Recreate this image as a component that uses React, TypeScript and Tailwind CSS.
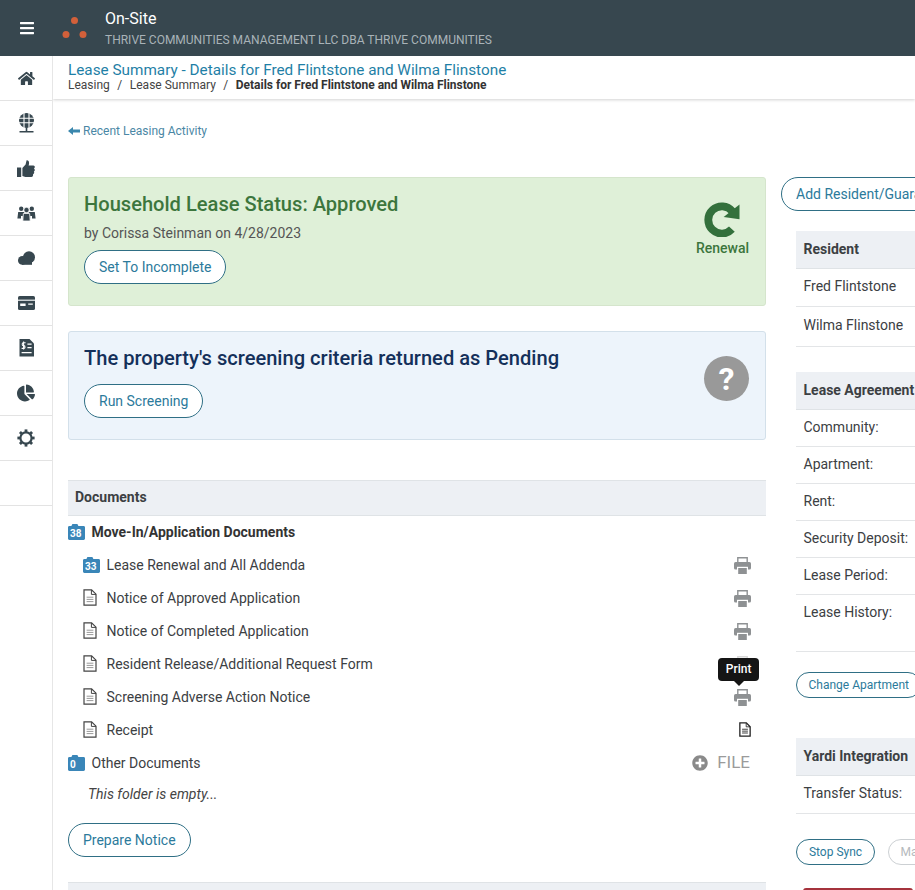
import type { ReactNode } from "react"
import { FaBars, FaChartPie, FaHome, FaPlusCircle } from "react-icons/fa"

function GlobeIcon() {
  return (
    <svg width="17" height="20" viewBox="0 0 17 20">
      <circle cx="8.5" cy="7.5" r="7.5" fill="currentColor" />
      <path d="M0.5 5.3h16M0.5 9.7h16M6 0v15M11 0v15" stroke="#fff" strokeWidth="1.1" />
      <path d="M8.5 15v3M1.5 18.8h14" stroke="currentColor" strokeWidth="1.6" />
    </svg>
  )
}

function ThumbIcon() {
  return (
    <svg width="18" height="17" viewBox="0 0 18 17" fill="currentColor">
      <path d="M0 7.5h4.2V17H0z" />
      <path d="M5.4 8 L8.6 4.6 L9.6 0.3 C11.8 0 12.7 2.2 11.6 5.6 H16.4 C18 5.6 18.3 7.8 17 8.4 C18.2 9.3 18 11 16.8 11.5 C17.6 12.5 17.1 14 16 14.3 C16.4 15.6 15.6 17 14.4 17 H8.4 L5.4 16z" />
    </svg>
  )
}

function UsersIcon() {
  return (
    <svg width="19" height="15" viewBox="0 0 19 15" fill="currentColor">
      <circle cx="4.2" cy="2.8" r="2.2" />
      <circle cx="14.8" cy="2.8" r="2.2" />
      <path d="M1.2 6h6v6.5H5.8V10H4v2.6H0.4z" />
      <path d="M11.8 6h6l0.8 6.6H15V10h-1.8v2.5h-1.4z" />
      <circle cx="9.5" cy="4" r="2.7" stroke="#fff" strokeWidth="0.8" />
      <path d="M6.4 7.4h6.2l0.6 7.6H5.8z" stroke="#fff" strokeWidth="0.8" />
    </svg>
  )
}

function CloudIcon() {
  return (
    <svg width="17" height="14" viewBox="0 0 17 14" fill="currentColor">
      <circle cx="4.4" cy="9.4" r="4.4" />
      <circle cx="11" cy="6.2" r="6" />
      <path d="M4 10h10v3.8H4z" />
    </svg>
  )
}

function CardIcon() {
  return (
    <svg width="17" height="14" viewBox="0 0 17 14">
      <rect width="17" height="14" rx="1.6" fill="currentColor" />
      <path d="M0 4.2h17" stroke="#fff" strokeWidth="1.1" />
      <path d="M2.2 7.4h5.4v2.6H2.2zM10.2 7.4h4.6v1.4h-4.6z" fill="#fff" />
    </svg>
  )
}

function BillIcon() {
  return (
    <svg width="15" height="18" viewBox="0 0 15 18">
      <path d="M0.5 0H10.5L15 4.5V17.5H0.5z" fill="currentColor" />
      <path d="M6.6 3.8H4.2C2.9 3.8 2.9 6.6 4.2 6.6H5C6.3 6.6 6.3 9.4 5 9.4H2.6M4.6 2.6V10.6" fill="none" stroke="#fff" strokeWidth="1.1" />
      <path d="M8.4 5.2h4.2M8.4 8.6h4.2M2.6 13.6h10" stroke="#fff" strokeWidth="1.3" />
    </svg>
  )
}

function GearIcon() {
  const angles = [0, 45, 90, 135, 180, 225, 270, 315]
  return (
    <svg width="18" height="18" viewBox="0 0 18 18" stroke="currentColor" fill="none">
      <circle cx="9" cy="9" r="5.6" strokeWidth="2.2" />
      {angles.map((a) => (
        <path key={a} d="M9 0.4V3" strokeWidth="2.8" transform={`rotate(${a} 9 9)`} />
      ))}
    </svg>
  )
}

function RenewIcon() {
  return (
    <svg width="36" height="35" viewBox="0 0 34 34" className="text-[#33703c]">
      <path d="M27 9A13.2 13.2 0 1 0 26.6 26.4" fill="none" stroke="currentColor" strokeWidth="7.6" />
      <path d="M34 2.5V16.8L18.6 14.6z" fill="currentColor" />
    </svg>
  )
}

function PrintIcon({ faded }: { faded?: boolean }) {
  return (
    <svg width="17" height="17" viewBox="0 0 17 17" className={`mt-[2px] ${faded ? "text-[#d9d9d9]" : "text-[#8e9193]"}`}>
      <path d="M3.8 0.7h9.4v5H3.8z" fill="none" stroke="currentColor" strokeWidth="1.4" />
      <rect y="5" width="17" height="7.6" rx="1.6" fill="currentColor" />
      <rect x="3" y="9.8" width="11" height="7.2" fill="#fff" />
      <rect x="4.2" y="11" width="8.6" height="6" fill="currentColor" />
    </svg>
  )
}

function DocIcon({ small }: { small?: boolean }) {
  return (
    <svg
      width={small ? 12 : 14}
      height={small ? 15 : 17}
      viewBox="0 0 14 17"
      fill="none"
      className={small ? "text-[#222]" : "text-[#444]"}
    >
      <path d="M1 0.8H8.6L13 5.2V16.2H1z" stroke="currentColor" strokeWidth={small ? 1.5 : 1.2} />
      <path d="M8.4 1V5.4H13" stroke="currentColor" strokeWidth="1" />
      <path d="M3.6 8.2h6.8M3.6 10.4h6.8M3.6 12.6h6.8" stroke={small ? "#222" : "#999"} strokeWidth="1" />
    </svg>
  )
}

const navIcons = [
  <FaHome size={17} />,
  <GlobeIcon />,
  <ThumbIcon />,
  <UsersIcon />,
  <CloudIcon />,
  <CardIcon />,
  <BillIcon />,
  <FaChartPie size={18} />,
  <GearIcon />,
  null,
]

function PillButton({ children, small, muted, className }: { children: ReactNode; small?: boolean; muted?: boolean; className?: string }) {
  return (
    <div
      className={`inline-flex shrink-0 items-center whitespace-nowrap rounded-full border bg-white ${
        muted ? "border-[#ccd0d3] text-[#b5babd]" : "border-[#2f6f85] text-[#2c7a9b]"
      } ${small ? "h-[26px] px-[11.5px] text-xs" : "h-[34px] px-[14px] text-sm"} ${className ?? ""}`}
    >
      {children}
    </div>
  )
}

function Folder({ count }: { count: string }) {
  return (
    <div className="relative h-[16px] w-[17px] shrink-0 text-[#3a86b8]">
      <svg width="17" height="16" viewBox="0 0 17 16" className="absolute left-0 top-0">
        <path d="M0 3.4C0 2.6 0.6 2 1.4 2H3.4L4.4 0H9.4L10.4 2H15.6C16.4 2 17 2.6 17 3.4V14.6C17 15.4 16.4 16 15.6 16H1.4C0.6 16 0 15.4 0 14.6z" fill="currentColor" />
      </svg>
      <span className="absolute bottom-[1px] left-[2px] text-[10px] font-bold leading-[10px] text-white">{count}</span>
    </div>
  )
}

function DocRow({ label, folder, receipt, faded }: { label: string; folder?: string; receipt?: boolean; faded?: boolean }) {
  return (
    <div className="flex h-[33px] items-center px-[15px] text-sm text-[#3c4043]">
      <div className="flex w-[23.5px] shrink-0 items-center">{folder ? <Folder count={folder} /> : <DocIcon />}</div>
      <span className="flex-1">{label}</span>
      {receipt ? <DocIcon small /> : <PrintIcon faded={faded} />}
    </div>
  )
}

function TableHead({ children }: { children: ReactNode }) {
  return (
    <div className="flex h-[38px] items-center whitespace-nowrap border-b border-[#dfe3e6] bg-[#edf0f4] pb-[2px] pl-[7.5px] text-sm font-bold text-[#3c4043]">
      {children}
    </div>
  )
}

function TableRow({ children, h = "h-[37px]", pb = "pb-[2px]" }: { children: ReactNode; h?: string; pb?: string }) {
  return <div className={`flex ${h} ${pb} items-center border-b border-[#e3e5e7] pl-[7.5px] text-sm text-[#3c4043]`}>{children}</div>
}

export default function App() {
  return (
    <div className="flex h-[890px] w-[915px] flex-col overflow-hidden bg-white font-['Roboto',sans-serif]">
      <header className="flex h-[56px] shrink-0 items-center bg-[#37474f]">
        <div className="flex w-[53px] shrink-0 justify-center text-white">
          <FaBars size={16} />
        </div>
        <svg width="26" height="22" viewBox="0 0 26 22" className="ml-[9px] shrink-0">
          <circle cx="12.5" cy="3.6" r="3.5" fill="#d2603a" />
          <circle cx="4" cy="17.6" r="3.5" fill="#d2603a" />
          <circle cx="21" cy="17.6" r="3.5" fill="#d2603a" />
        </svg>
        <div className="ml-[17px] pt-[2px]">
          <div className="text-base leading-[20px] text-white">On-Site</div>
          <div className="mt-[2px] text-xs leading-[18px] text-[#a9b3b8]">THRIVE COMMUNITIES MANAGEMENT LLC DBA THRIVE COMMUNITIES</div>
        </div>
      </header>
      <div className="flex min-h-0 flex-1">
        <nav className="z-10 w-[53px] shrink-0 border-r border-[#e6e6e6] bg-white">
          {navIcons.map((icon, i) => (
            <div key={i} className="flex h-[45px] items-center justify-center border-b border-[#e3e3e3] text-[#37474f]">
              {icon}
            </div>
          ))}
        </nav>
        <main className="min-w-0 flex-1 overflow-hidden">
          <div className="h-[43px] pl-[15px] pt-[5px] shadow-[0_1px_3px_rgba(0,0,0,0.18)]">
            <div className="text-[15.3px] leading-[18px] text-[#1f7fa6]">Lease Summary - Details for Fred Flintstone and Wilma Flinstone</div>
            <div className="flex gap-[7.5px] text-xs leading-[13px] text-[#444]">
              <span>Leasing</span>
              <span>/</span>
              <span>Lease Summary</span>
              <span>/</span>
              <span className="font-bold tracking-[-0.02px] text-[#333]">Details for Fred Flintstone and Wilma Flinstone</span>
            </div>
          </div>
          <div className="flex h-[78px] items-start pl-[15px] pt-[25px] text-xs text-[#4a87a5]">
            <div className="flex h-[14px] items-center gap-[3px]">
              <svg width="12" height="10" viewBox="0 0 12 10" className="text-[#3a87ad]">
                <path d="M0 5L5 1V3.4H12V6.6H5V9z" fill="currentColor" />
              </svg>
              Recent Leasing Activity
            </div>
          </div>
          <div className="flex gap-[15px] pl-[15px]">
            <div className="w-[698px] shrink-0">
              <section className="relative h-[129px] rounded-[3px] border border-[#d5e5cc] bg-[#dff0d8] px-[15px] pt-[12px]">
                <h2 className="text-[20.1px] font-medium leading-[28px] text-[#3c763d]">Household Lease Status: Approved</h2>
                <p className="mt-[6px] text-sm leading-[18px] text-[#555]">by Corissa Steinman on 4/28/2023</p>
                <PillButton className="mt-[8px]">Set To Incomplete</PillButton>
                <div className="absolute right-[16px] top-[24px] flex flex-col items-center text-[#3c763d]">
                  <RenewIcon />
                  <span className="mt-[3px] text-sm font-medium leading-[16px]">Renewal</span>
                </div>
              </section>
              <section className="relative mt-[25px] h-[109px] rounded-[3px] border border-[#d3e0ea] bg-[#edf4fb] px-[15px] pt-[12px]">
                <h2 className="text-[20.1px] font-medium leading-[28px] text-[#14305a]">The property's screening criteria returned as Pending</h2>
                <PillButton className="mt-[12px]">Run Screening</PillButton>
                <div className="absolute right-[16px] top-[24px] flex h-[45px] w-[45px] items-center justify-center rounded-full bg-[#999] text-[32px] font-bold leading-none text-white">
                  ?
                </div>
              </section>
              <div className="mt-[40px] flex h-[36px] items-center border-y border-[#dfe3e6] bg-[#edf0f4] pb-[2px] pl-[7px] text-sm font-bold text-[#3c4043]">
                Documents
              </div>
              <div className="-mt-[1px] flex h-[33px] items-center text-sm font-bold text-[#333]">
                <div className="w-[23.5px]">
                  <Folder count="38" />
                </div>
                Move-In/Application Documents
              </div>
              <DocRow label="Lease Renewal and All Addenda" folder="33" />
              <DocRow label="Notice of Approved Application" />
              <DocRow label="Notice of Completed Application" />
              <DocRow label="Resident Release/Additional Request Form" faded />
              <div className="relative">
                <DocRow label="Screening Adverse Action Notice" />
                <div className="absolute bottom-[32px] right-[7px] rounded-[4px] bg-[#151515] px-[7.5px] py-[4px] text-xs font-medium leading-[15px] text-white">
                  Print
                  <div className="absolute left-1/2 top-full -ml-[5px] border-x-[5px] border-t-[5px] border-x-transparent border-t-[#151515]" />
                </div>
              </div>
              <DocRow label="Receipt" receipt />
              <div className="flex h-[33px] items-center pr-[16px] text-sm text-[#3c4043]">
                <div className="w-[23.5px]">
                  <Folder count="0" />
                </div>
                <span className="flex-1">Other Documents</span>
                <div className="flex items-center gap-[9px] text-[17px] text-[#9b9b9b]">
                  <FaPlusCircle size={16} className="text-[#8a8a8a]" />
                  FILE
                </div>
              </div>
              <div className="flex h-[29px] items-center pl-[20px] text-sm italic text-[#444]">This folder is empty...</div>
              <PillButton className="mt-[15px]">Prepare Notice</PillButton>
              <div className="mt-[25px] h-[10px] border-t border-[#dfe3e6] bg-[#edf0f4]" />
            </div>
            <div className="w-[400px] shrink-0">
              <PillButton>Add Resident/Guarantor</PillButton>
              <div className="ml-[15px] mt-[20px]">
                <TableHead>Resident</TableHead>
                <TableRow h="h-[38px]" pb="pb-[3px]">Fred Flintstone</TableRow>
                <TableRow h="h-[40px]" pb="pb-[3px]">Wilma Flinstone</TableRow>
                <div className="mt-[25px]">
                  <TableHead>Lease Agreement</TableHead>
                </div>
                <TableRow>Community:</TableRow>
                <TableRow>Apartment:</TableRow>
                <TableRow>Rent:</TableRow>
                <TableRow>Security Deposit:</TableRow>
                <TableRow>Lease Period:</TableRow>
                <div className="flex h-[57px] items-start border-b border-[#e3e5e7] pl-[7.5px] pt-[7px] text-sm text-[#3c4043]">Lease History:</div>
                <PillButton small className="mt-[20px]">Change Apartment</PillButton>
                <div className="mt-[40px]">
                  <TableHead>Yardi Integration</TableHead>
                </div>
                <TableRow h="h-[38px]" pb="pb-[3px]">Transfer Status:</TableRow>
                <div className="mt-[25px] flex gap-[13px]">
                  <PillButton small className="w-[79px] justify-center">Stop Sync</PillButton>
                  <PillButton small muted>Make Changes</PillButton>
                </div>
                <div className="ml-[7px] mt-[23px] h-[4px] w-[110px] rounded-t-[3px] bg-[#a5323c]" />
              </div>
            </div>
          </div>
        </main>
      </div>
    </div>
  )
}
